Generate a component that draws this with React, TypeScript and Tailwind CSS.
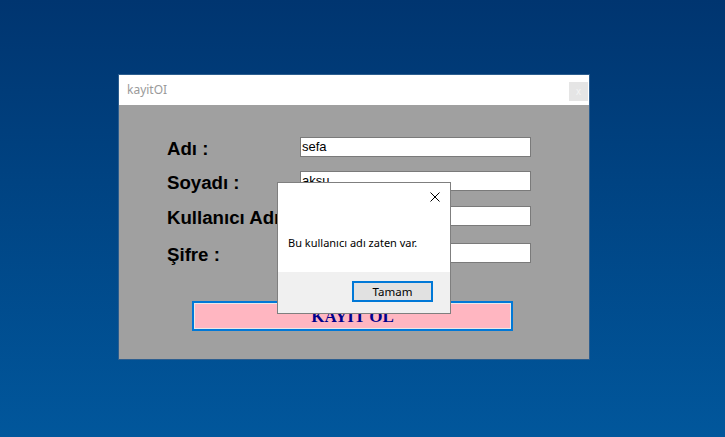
import React from "react";

const labelCls =
  "w-[133px] shrink-0 font-['Liberation_Sans',Arial,sans-serif] font-bold text-[18.67px] leading-[20px] text-black pt-[2px] whitespace-nowrap";
const inputCls =
  "w-[231px] h-[20px] bg-white border border-[#7a7a7a] font-['Liberation_Sans',Arial,sans-serif] text-[13px] leading-[18px] pl-[1px] text-black overflow-hidden";

function Row({ label, value, className }: { label: string; value: string; className: string }) {
  return (
    <div className={"flex h-[20px] " + className}>
      <div className={labelCls}>{label}</div>
      <div className={inputCls}>{value}</div>
    </div>
  );
}

export default function App() {
  return (
    <div className="w-[725px] h-[437px] bg-gradient-to-b from-[#003570] to-[#01579c] pt-[74px] pl-[118px] overflow-hidden">
      <div className="relative w-[472px] border border-[#2d5e8f]">
        {/* title bar */}
        <div className="h-[30px] bg-white flex items-start justify-between">
          <span className="pl-[8px] pt-[7px] font-['Noto_Sans',sans-serif] text-[12px] leading-[16px] text-[#9a9a9a]">
            kayitOI
          </span>
          <div className="mt-[7px] mr-[1px] w-[19px] h-[19px] bg-[#e5e5e5] flex items-center justify-center text-[#f4f4f4] text-[10px] font-['Liberation_Sans',Arial,sans-serif] leading-none">
            x
          </div>
        </div>
        {/* body */}
        <div className="h-[254px] bg-[#a0a0a0] pl-[48px] pt-[32px] flex flex-col">
          <Row label="Adı :" value="sefa" className="" />
          <Row label="Soyadı :" value="aksu" className="mt-[14px]" />
          <Row label="Kullanıcı Adı :" value="" className="mt-[15px]" />
          <Row label="Şifre :" value="" className="mt-[17px]" />
          <div className="mt-[38px] ml-[25px] w-[321px] h-[30px] border-2 border-[#0078d7] bg-[#ffb6c1] flex items-center justify-center">
            <div className="w-full h-full border border-[#e8e8e8] flex items-center justify-center font-['Liberation_Serif','Times_New_Roman',serif] font-bold text-[17px] leading-none text-[#00008b] pt-[1px]">
              KAYIT OL
            </div>
          </div>
        </div>

        {/* message box */}
        <div className="absolute left-[158px] top-[107px] w-[174px] h-[132px] border border-[#7f7f7f] bg-white flex flex-col">
          <div className="h-[89px] flex flex-col">
            <div className="flex justify-end pt-[9px] pr-[10px]">
              <svg width="10" height="10" viewBox="0 0 10 10">
                <path d="M0.5 0.5 L9.5 9.5 M9.5 0.5 L0.5 9.5" stroke="#000" strokeWidth="1" />
              </svg>
            </div>
            <div className="pl-[10px] pt-[33px] font-['Noto_Sans',sans-serif] text-[11px] leading-[16px] text-black whitespace-nowrap">
              Bu kullanıcı adı zaten var.
            </div>
          </div>
          <div className="flex-1 bg-[#f0f0f0] flex justify-end items-start pt-[9px] pr-[17px]">
            <div className="w-[81px] h-[21px] border-2 border-[#0078d7] bg-[#e1e1e1] flex items-center justify-center font-['Noto_Sans',sans-serif] text-[11.5px] leading-none text-black">
              Tamam
            </div>
          </div>
        </div>
      </div>
    </div>
  );
}
